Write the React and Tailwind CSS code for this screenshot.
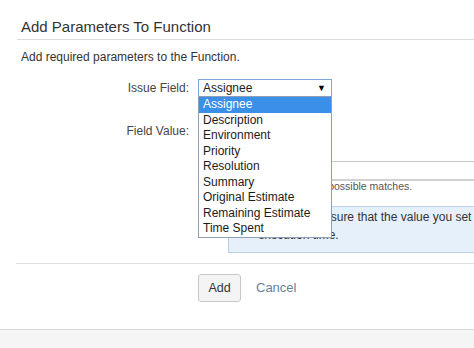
const options = [
  "Assignee",
  "Description",
  "Environment",
  "Priority",
  "Resolution",
  "Summary",
  "Original Estimate",
  "Remaining Estimate",
  "Time Spent",
];

export default function App() {
  return (
    <div className="w-[474px] h-[348px] overflow-hidden bg-white font-['Liberation_Sans',Arial,sans-serif] text-[#333] flex flex-col">
      <div className="w-[640px] flex-1 flex flex-col">
        {/* heading */}
        <div className="ml-[17px] h-[40px] pt-[17px] pl-[4px] border-b border-[#dcdcdc]">
          <h2 className="text-[15px] leading-[20px] text-[#333]">Add Parameters To Function</h2>
        </div>

        <p className="mt-[9px] ml-[21px] text-[12px] leading-[16px]">
          Add required parameters to the Function.
        </p>

        {/* issue field */}
        <div className="mt-[14px] flex items-center h-[18px]">
          <label className="w-[198px] pr-[9px] text-right text-[12px] leading-[18px] text-[#444]">
            Issue Field:
          </label>
          <div className="relative">
            <div className="w-[134px] h-[18px] border border-[#7ea6dc] bg-white flex items-center justify-between pl-[4px] pr-[5px]">
              <span className="text-[12px] leading-[16px] text-[#222]">Assignee</span>
              <span className="text-[9px] leading-none text-black">▼</span>
            </div>
            <ul className="absolute left-0 top-[17px] z-10 w-[134px] border border-[#8d9fb5] bg-white">
              {options.map((o, i) => (
                <li
                  key={o}
                  className={
                    i === 0
                      ? "h-[15.5px] pl-[4px] text-[12px] leading-[15.5px] bg-[#3a8fe8] text-white"
                      : "h-[15.5px] pl-[4px] text-[12px] leading-[15.5px] text-[#1c1c1c]"
                  }
                >
                  {o}
                </li>
              ))}
            </ul>
          </div>
        </div>

        {/* field value */}
        <div className="mt-[25px] flex items-center h-[18px]">
          <label className="w-[198px] pr-[9px] text-right text-[12px] leading-[18px] text-[#444]">
            Field Value:
          </label>
          <div className="w-[120px] h-[18px] border border-[#ccc]" />
        </div>

        <div className="flex">
          <div className="w-[198px] shrink-0" />
          <div className="flex-1">
            <div className="mt-[21px] h-[20px] border-t border-t-[#c9c9c9] border-b-2 border-b-[#d2d2d2]" />
            <p className="text-[10.5px] leading-[10px] text-[#555] whitespace-nowrap">
              Start typing to get the list of possible matches.
            </p>
            <div className="mt-[15px] ml-[30px] h-[47px] pt-[1px] pl-[29px] border border-[#bcd1e8] bg-[#e6f0fb]">
              <p className="text-[12px] leading-[18px] text-[#333] whitespace-nowrap">
                Please make sure that the value you set will be valid at
                <br />
                execution time.
              </p>
            </div>
          </div>
        </div>

        {/* buttons */}
        <div className="mt-[10px] ml-[16px] border-t border-[#dedede] pt-[10px] flex items-center">
          <div className="w-[182px] shrink-0" />
          <button className="w-[43px] h-[28px] border border-[#c8c8c8] rounded-[3px] bg-[#f4f4f4] text-[12.5px] text-[#333]">
            Add
          </button>
          <a className="ml-[15px] text-[13px] text-[#6b8099]">Cancel</a>
        </div>

        <div className="mt-[27px] flex-1 border-t border-[#d8d8d8] bg-[#f5f5f5]" />
      </div>
    </div>
  );
}
